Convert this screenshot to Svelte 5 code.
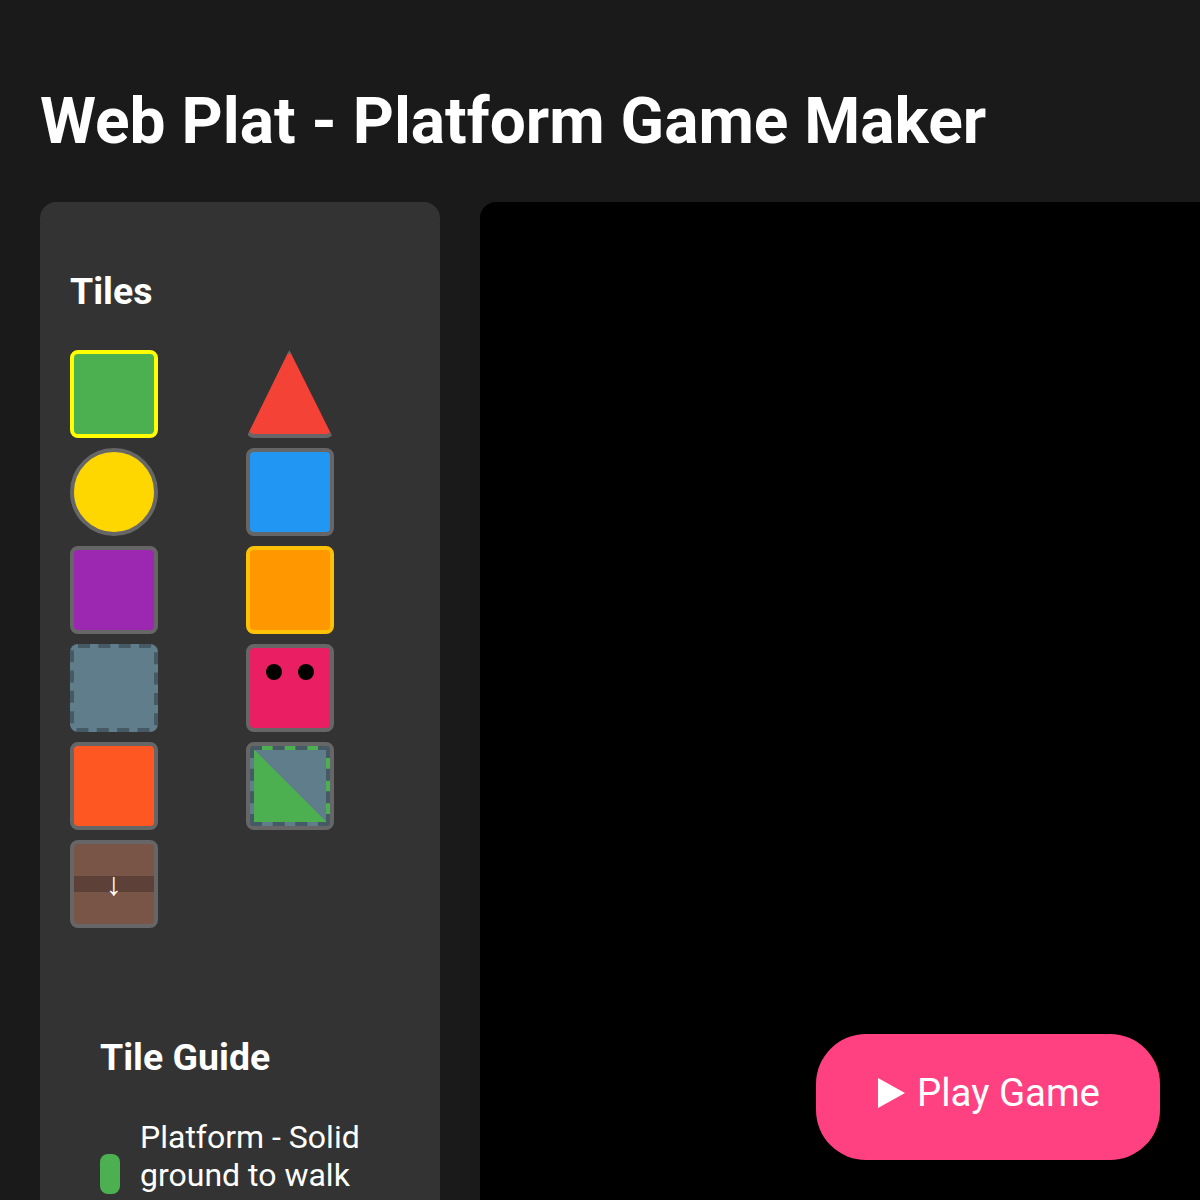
<script>
  const tiles = [
    { id: 'platform', cls: 'platform selected' },
    { id: 'spike', cls: 'spike' },
    { id: 'coin', cls: 'coin' },
    { id: 'water', cls: 'water' },
    { id: 'checkpoint', cls: 'checkpoint' },
    { id: 'spring', cls: 'spring' },
    { id: 'ghost', cls: 'ghost' },
    { id: 'enemy', cls: 'enemy' },
    { id: 'lava', cls: 'lava' },
    { id: 'secret', cls: 'secret' },
    { id: 'oneway', cls: 'oneway', arrow: '↓' }
  ];
</script>

<div class="page">
  <h1>Web Plat - Platform Game Maker</h1>

  <div class="editor">
    <aside class="panel">
      <h2>Tiles</h2>
      <div class="tile-grid">
        {#each tiles as tile (tile.id)}
          <div class="tile-cell">
            {#if tile.id === 'secret'}
              <div class="tile secret-frame">
                <div class="secret-inner">
                  <svg class="dashes" width="80" height="80" viewBox="0 0 80 80">
                    <path d="M0 2H80" />
                    <path d="M78 0V80" />
                    <path d="M80 78H0" />
                    <path d="M2 80V0" />
                  </svg>
                </div>
              </div>
            {:else if tile.id === 'ghost'}
              <div class="ghost-tile">
                <svg class="ghost-dashes" width="88" height="88" viewBox="0 0 88 88">
                  <rect x="2" y="2" width="84" height="84" rx="6" />
                </svg>
              </div>
            {:else}
              <div class="tile {tile.cls}">{#if tile.arrow}<span class="arrow">{tile.arrow}</span>{/if}</div>
            {/if}
          </div>
        {/each}
      </div>

      <section class="guide">
        <h2>Tile Guide</h2>
        <div class="guide-row">
          <span class="swatch"></span>
          <span class="guide-text">Platform - Solid ground to walk on</span>
        </div>
      </section>
    </aside>

    <div class="stage"></div>
  </div>

  <button class="play">
    <svg class="play-icon" width="27" height="30" viewBox="0 0 27 30"><path d="M0 0L27 15L0 30Z" /></svg>
    <span>Play Game</span>
  </button>
</div>

<style>
  :global(body) {
    margin: 0;
    background: #1a1a1a;
  }

  .page {
    position: relative;
    box-sizing: border-box;
    width: 1200px;
    height: 1200px;
    overflow: hidden;
    padding: 0 0 0 40px;
    color: #fff;
    font-family: Roboto, "Liberation Sans", sans-serif;
  }

  h1 {
    margin: 0;
    padding: 84px 0 42px;
    font-size: 64px;
    line-height: 76px;
    font-weight: 700;
  }

  .editor {
    display: flex;
    gap: 40px;
    align-items: flex-start;
  }

  .panel {
    flex: none;
    box-sizing: border-box;
    width: 400px;
    height: 1300px;
    padding: 68px 30px 0;
    background: #333;
    border-radius: 16px;
  }

  h2 {
    margin: 0;
    font-size: 37.44px;
    line-height: 42px;
    font-weight: 700;
  }

  .tile-grid {
    display: grid;
    grid-template-columns: 164px 164px;
    column-gap: 12px;
    row-gap: 10px;
    margin-top: 38px;
  }

  .tile {
    box-sizing: border-box;
    position: relative;
    width: 88px;
    height: 88px;
    border: 4px solid #666;
    border-radius: 8px;
  }

  .platform { background: #4caf50; }
  .selected { border-color: #ff0; }

  .spike {
    background: #f44336;
    clip-path: polygon(49.2% 0, 99% 100%, 0 100%);
  }

  .coin {
    background: #ffd700;
    border-radius: 50%;
  }

  .water { background: #2196f3; }
  .checkpoint { background: #9c27b0; }
  .spring {
    background: #ff9800;
    border-color: #ffc107;
  }

  .ghost-tile {
    position: relative;
    width: 88px;
    height: 88px;
    border-radius: 8px;
    background: #607d8b;
  }

  .ghost-dashes {
    display: block;
  }
  .ghost-dashes rect {
    fill: none;
    stroke: #455a64;
    stroke-width: 4;
    stroke-dasharray: 12 8.36;
  }

  .enemy { background: #e91e63; }
  .enemy::before,
  .enemy::after {
    content: '';
    position: absolute;
    top: 16px;
    width: 16px;
    height: 16px;
    border-radius: 50%;
    background: #000;
  }
  .enemy::before { left: 16px; }
  .enemy::after { right: 16px; }

  .lava { background: #ff5722; }

  .secret-frame { overflow: hidden; }
  .secret-inner {
    box-sizing: border-box;
    position: relative;
    width: 100%;
    height: 100%;
    border: 4px solid transparent;
    background: linear-gradient(45deg, #4caf50 50%, #607d8b 50%);
  }
  .dashes {
    position: absolute;
    top: -4px;
    left: -4px;
  }
  .dashes path {
    fill: none;
    stroke: #455a64;
    stroke-width: 4;
    stroke-dasharray: 12 10.67;
  }

  .oneway {
    display: flex;
    align-items: center;
    justify-content: center;
    background: #795548;
  }
  .oneway::before {
    content: '';
    position: absolute;
    left: 0;
    right: 0;
    top: 32px;
    height: 16px;
    background: #5d4037;
  }
  .arrow {
    position: relative;
    font-size: 32px;
    line-height: 1;
    color: #fff;
  }

  .guide {
    margin-top: 108px;
    padding: 0 30px;
  }

  .guide-row {
    display: flex;
    align-items: center;
    gap: 20px;
    margin-top: 40px;
    font-size: 32px;
    line-height: 38px;
  }

  .swatch {
    flex: none;
    width: 20px;
    height: 40px;
    margin-bottom: 2px;
    border-radius: 8px;
    background: #4caf50;
  }

  .stage {
    flex: none;
    width: 900px;
    height: 1300px;
    background: #000;
    border-radius: 16px;
  }

  .play {
    position: absolute;
    right: 40px;
    bottom: 40px;
    display: flex;
    align-items: center;
    justify-content: center;
    gap: 12px;
    width: 344px;
    height: 126px;
    padding: 0 0 10px 2px;
    border: none;
    border-radius: 50px;
    background: #ff4081;
    color: #fff;
    font-family: inherit;
    font-size: 38.4px;
  }

  .play-icon {
    flex: none;
    margin-top: 2px;
    fill: #fff;
  }
</style>
